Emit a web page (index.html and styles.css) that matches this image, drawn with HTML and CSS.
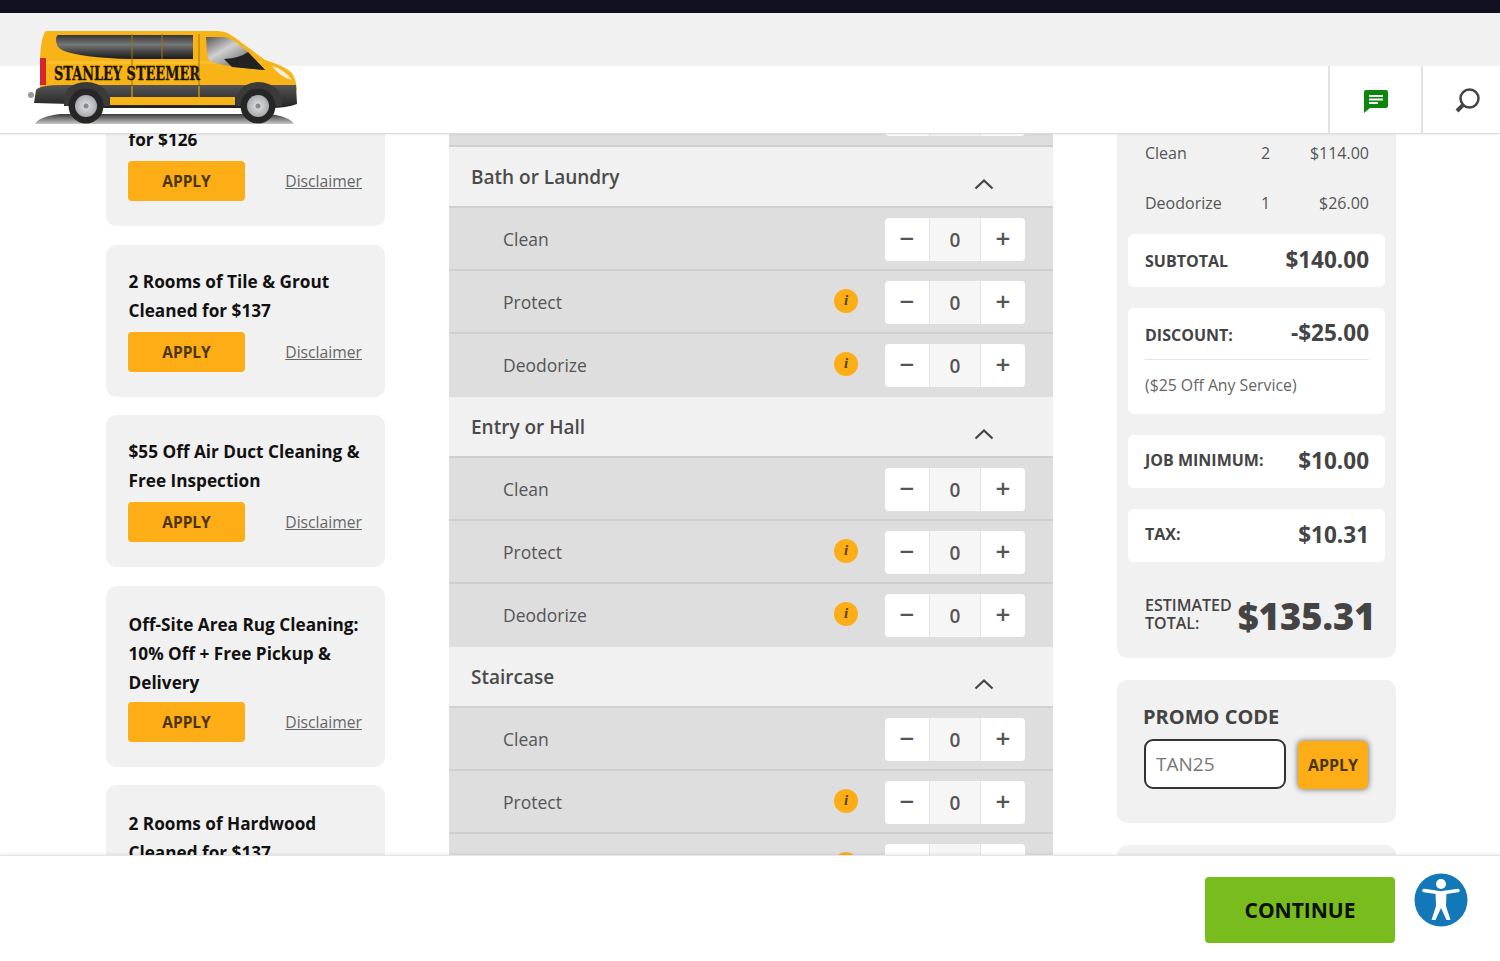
FILE: index.html
```html
<!DOCTYPE html>
<html lang="en">
<head>
<meta charset="utf-8">
<title>Stanley Steemer</title>
<link rel="stylesheet" href="styles.css">
</head>
<body>
<div class="page">
  <div class="topbar"></div>
  <header class="header">
    <div class="header-band"></div>
    <div class="header-nav">
      <button class="nav-btn nav-chat" aria-label="Chat">
        <svg width="26" height="25" viewBox="0 0 26 25"><path class="chat-shape" d="M3 1h20a2 2 0 0 1 2 2v14a2 2 0 0 1-2 2H7l-6 5V3a2 2 0 0 1 2-2z"/><path class="chat-lines" d="M6 7h14M6 10.500h14M6 14h9"/></svg>
      </button>
      <button class="nav-btn nav-search" aria-label="Search">
        <svg width="28" height="28" viewBox="0 0 28 28"><circle class="search-ring" cx="16.500" cy="11.500" r="9"/><path class="search-handle" d="M9.800 18.200 4 24"/></svg>
      </button>
    </div>
    <svg class="logo" width="290" height="110" viewBox="20 20 290 110" role="img" aria-label="Stanley Steemer van">
      <defs>
        <linearGradient id="win" x1="0" y1="0" x2="0" y2="1"><stop offset="0" stop-color="#333"/><stop offset="0.4" stop-color="#777"/><stop offset="0.7" stop-color="#444"/><stop offset="1" stop-color="#1a1a1a"/></linearGradient>
        <linearGradient id="cab" x1="0" y1="0" x2="1" y2="1"><stop offset="0" stop-color="#555"/><stop offset="0.35" stop-color="#d0d0d0"/><stop offset="0.7" stop-color="#777"/><stop offset="1" stop-color="#333"/></linearGradient>
        <linearGradient id="shad" x1="0" y1="0" x2="0" y2="1"><stop offset="0" stop-color="#3a3a3a"/><stop offset="1" stop-color="#c8c8c8"/></linearGradient>
        <linearGradient id="band" x1="0" y1="0" x2="0" y2="1"><stop offset="0" stop-color="#555"/><stop offset="1" stop-color="#222"/></linearGradient>
        <radialGradient id="hub"><stop offset="0" stop-color="#e2e4e6"/><stop offset="1" stop-color="#a8aaad"/></radialGradient>
      </defs>
      <path fill="url(#shad)" d="M35 124Q38 117 60 114H270Q290 117 294 124Z"/>
      <path fill="#f8b316" d="M46 31H218Q226 31 234 37L265 60Q282 65 291 72Q296 78 297 90H40V58Q41 36 46 31Z"/>
      <path fill="#fcc83a" d="M47 61H262V64H47Z" opacity=".6"/>
      <path fill="url(#win)" d="M58 35H193V59H132Q80 58 62 50Q56 47 56 40Q56 36 58 35Z"/>
      <path stroke="#9c7414" stroke-width="1" d="M132 34V97M162 34V59M199 34V97"/>
      <path fill="url(#cab)" d="M206 37H224Q232 38 248 52L265 70Q236 68 215 63Q207 61 207 54Z"/>
      <path fill="#222" d="M224 59Q240 58 248 52L265 70L232 67Z"/>
      <path fill="#d6252c" d="M40 58H46V85H40Z"/>
      <path fill="url(#band)" d="M34 103 36 90Q40 85 62 85H296L297 104Q287 108 270 108H105L70 104Z"/>
      <path fill="#f8b316" d="M110 97H235V105H110Z"/>
      <path stroke="#f8b316" stroke-width="1" d="M132 86V97M199 86V97"/>
      <path fill="#3a3a3a" d="M64 106Q62 83 86 82Q110 83 110 106ZM236 106Q236 83 258 82Q282 83 282 106Z"/>
      <circle cx="86" cy="106" r="17.500" fill="#262626"/><circle cx="86" cy="106" r="11" fill="url(#hub)"/><circle cx="86" cy="106" r="2.500" fill="#8a8a8a"/>
      <circle cx="258" cy="106" r="17.500" fill="#262626"/><circle cx="258" cy="106" r="11" fill="url(#hub)"/><circle cx="258" cy="106" r="2.500" fill="#8a8a8a"/>
      <path fill="#f2efe2" d="M272 66Q284 69 292 80Q280 77 272 66Z"/>
      <circle cx="31" cy="95" r="3" fill="#999"/>
      <text class="logo-text" x="54" y="80" textLength="146" lengthAdjust="spacingAndGlyphs">STANLEY STEEMER</text>
    </svg>
  </header>

  <main class="main">
    <section class="offers">
      <article class="offer">
        <h3 class="offer-title">2 Rooms of Carpet Cleaned<br>for $126</h3>
        <div class="offer-actions"><button class="apply">APPLY</button><a class="disclaimer" href="#">Disclaimer</a></div>
      </article>
      <article class="offer">
        <h3 class="offer-title">2 Rooms of Tile &amp; Grout<br>Cleaned for $137</h3>
        <div class="offer-actions"><button class="apply">APPLY</button><a class="disclaimer" href="#">Disclaimer</a></div>
      </article>
      <article class="offer">
        <h3 class="offer-title">$55 Off Air Duct Cleaning &amp;<br>Free Inspection</h3>
        <div class="offer-actions"><button class="apply">APPLY</button><a class="disclaimer" href="#">Disclaimer</a></div>
      </article>
      <article class="offer">
        <h3 class="offer-title">Off-Site Area Rug Cleaning:<br>10% Off + Free Pickup &amp;<br>Delivery</h3>
        <div class="offer-actions"><button class="apply">APPLY</button><a class="disclaimer" href="#">Disclaimer</a></div>
      </article>
      <article class="offer">
        <h3 class="offer-title">2 Rooms of Hardwood<br>Cleaned for $137</h3>
        <div class="offer-actions"><button class="apply">APPLY</button><a class="disclaimer" href="#">Disclaimer</a></div>
      </article>
    </section>

    <section class="services">
      <div class="row row-clipped"><span class="row-name">Deodorize</span><div class="stepper"><span class="step">−</span><span class="count">0</span><span class="step">+</span></div></div>

      <div class="area"><span>Bath or Laundry</span><svg class="chev" width="20" height="12" viewBox="0 0 20 12"><path d="M1.500 10.500 10 2.500l8.500 8"/></svg></div>
      <div class="row"><span class="row-name">Clean</span><div class="stepper"><span class="step">−</span><span class="count">0</span><span class="step">+</span></div></div>
      <div class="row"><span class="row-name">Protect</span><span class="info">i</span><div class="stepper"><span class="step">−</span><span class="count">0</span><span class="step">+</span></div></div>
      <div class="row row-last"><span class="row-name">Deodorize</span><span class="info">i</span><div class="stepper"><span class="step">−</span><span class="count">0</span><span class="step">+</span></div></div>

      <div class="area"><span>Entry or Hall</span><svg class="chev" width="20" height="12" viewBox="0 0 20 12"><path d="M1.500 10.500 10 2.500l8.500 8"/></svg></div>
      <div class="row"><span class="row-name">Clean</span><div class="stepper"><span class="step">−</span><span class="count">0</span><span class="step">+</span></div></div>
      <div class="row"><span class="row-name">Protect</span><span class="info">i</span><div class="stepper"><span class="step">−</span><span class="count">0</span><span class="step">+</span></div></div>
      <div class="row row-last"><span class="row-name">Deodorize</span><span class="info">i</span><div class="stepper"><span class="step">−</span><span class="count">0</span><span class="step">+</span></div></div>

      <div class="area"><span>Staircase</span><svg class="chev" width="20" height="12" viewBox="0 0 20 12"><path d="M1.500 10.500 10 2.500l8.500 8"/></svg></div>
      <div class="row"><span class="row-name">Clean</span><div class="stepper"><span class="step">−</span><span class="count">0</span><span class="step">+</span></div></div>
      <div class="row"><span class="row-name">Protect</span><span class="info">i</span><div class="stepper"><span class="step">−</span><span class="count">0</span><span class="step">+</span></div></div>
      <div class="row row-last"><span class="row-name">Deodorize</span><span class="info">i</span><div class="stepper"><span class="step">−</span><span class="count">0</span><span class="step">+</span></div></div>
    </section>

    <aside class="side">
      <div class="summary">
        <div class="line"><span class="line-name">Clean</span><span class="line-qty">2</span><span class="line-price">$114.00</span></div>
        <div class="line"><span class="line-name">Deodorize</span><span class="line-qty">1</span><span class="line-price">$26.00</span></div>
        <div class="total-card total-first"><span class="total-label">SUBTOTAL</span><span class="total-value">$140.00</span></div>
        <div class="total-card total-discount">
          <div class="discount-top"><span class="total-label">DISCOUNT:</span><span class="total-value">-$25.00</span></div>
          <div class="discount-note">($25 Off Any Service)</div>
        </div>
        <div class="total-card total-raised"><span class="total-label">JOB MINIMUM:</span><span class="total-value">$10.00</span></div>
        <div class="total-card total-raised"><span class="total-label">TAX:</span><span class="total-value">$10.31</span></div>
        <div class="estimate"><span class="estimate-label">ESTIMATED<br>TOTAL:</span><span class="estimate-value">$135.31</span></div>
      </div>
      <div class="promo">
        <h3 class="promo-title">PROMO CODE</h3>
        <div class="promo-form">
          <input class="promo-input" type="text" value="TAN25" aria-label="Promo code">
          <button class="promo-apply">APPLY</button>
        </div>
      </div>
      <div class="side-next"></div>
    </aside>
  </main>

  <footer class="footer">
    <button class="continue">CONTINUE</button>
    <svg class="a11y" width="54" height="54" viewBox="0 0 54 54" role="img" aria-label="Accessibility">
      <circle class="a11y-bg" cx="27" cy="27" r="26.500"/>
      <circle class="a11y-fg" cx="27" cy="11" r="5"/>
      <path class="a11y-arms" d="M10 17.500 27 20l17-2.500"/>
      <path class="a11y-fg" d="M21.500 19.500h11L32 33l4.500 14h-4L27 35l-5.500 12h-4L22 33z"/>
    </svg>
  </footer>
</div>
</body>
</html>
```
FILE: styles.css
```css
* { box-sizing: border-box; }
html, body { margin: 0; height: 100%; }
body { font-family: "Open Sans", "Liberation Sans", sans-serif; color: #444; background: #fff; overflow: hidden; }
button { font-family: inherit; border: 0; cursor: pointer; }
h3 { margin: 0; }

.page { height: 961px; display: flex; flex-direction: column; }
.topbar { height: 13px; background: #11111f; flex: none; }

.header { position: relative; flex: none; height: 121px; display: flex; flex-direction: column; z-index: 2; background: #fff; border-bottom: 1px solid #dcdcdc; box-shadow: 0 1px 2px rgba(0,0,0,.06); }
.header-band { height: 53px; background: #f1f1f1; }
.header-nav { flex: 1; display: flex; justify-content: flex-end; }
.nav-btn { background: none; padding: 3px 0 0; display: flex; align-items: center; justify-content: center; border-left: 2px solid #e2e2e2; }
.nav-chat { width: 93px; }
.nav-search { width: 79px; padding: 2px 0 0 10px; }
.chat-shape { fill: #0d860f; }
.chat-lines { stroke: #fff; stroke-width: 2; fill: none; }
.search-ring { fill: none; stroke: #444; stroke-width: 2.500; }
.search-handle { fill: none; stroke: #444; stroke-width: 4; }
.logo { position: absolute; left: 20px; top: 7px; }
.logo-text { font-family: "DejaVu Serif Condensed", "DejaVu Serif", serif; font-weight: 700; font-size: 18px; fill: #1a1508; stroke: #1a1508; stroke-width: .3; }

.main { flex: 1; min-height: 0; overflow: hidden; display: flex; align-items: flex-start; gap: 64px; padding-left: 106px; }

.offers { width: 279px; flex: none; margin-top: -60px; display: flex; flex-direction: column; gap: 18.500px; }
.offer { background: #f1f1f1; border-radius: 10px; padding: 22px 23px 25px 22px; }
.offer:nth-child(n+4) { padding-top: 24px; }
.offer-title { font-size: 17.200px; line-height: 29px; font-weight: 700; color: #111; margin-left: .5px; white-space: nowrap; }
.offer-actions { margin-top: 7px; display: flex; align-items: center; justify-content: space-between; }
.offer:nth-child(n+4) .offer-actions { margin-top: 5px; }
.apply { width: 117px; height: 40px; background: #fdae16; border-radius: 4px; font-size: 15.500px; font-weight: 700; color: #4c340a; }
.disclaimer { font-size: 15.700px; color: #666; text-decoration: underline; }

.services { width: 604px; flex: none; margin-top: -52px; }
.area { height: 61px; background: #f1f1f1; border-bottom: 2px solid #cfcfcf; padding: 0 59px 0 22px; display: flex; align-items: center; justify-content: space-between; font-size: 19px; font-weight: 600; color: #4a4a4a; }
.chev { margin-top: 14px; }
.chev path { fill: none; stroke: #444; stroke-width: 2.200; }
.row { height: 63px; background: #dedede; border-bottom: 2px solid #cfcfcf; padding: 0 28px 0 54px; display: flex; align-items: center; font-size: 17.500px; color: #555; font-weight: 500; }
.row-clipped { height: 65px; }
.row-last { border-bottom-color: #dedede; }
.row-name { margin-right: auto; }
.info { width: 24px; height: 24px; margin-right: 27px; margin-top: -2px; border-radius: 50%; background: #fdae16; color: #5a4210; display: flex; align-items: center; justify-content: center; font-family: "Liberation Serif", serif; font-style: italic; font-weight: 700; font-size: 15px; }
.stepper { width: 140px; height: 43px; margin-top: 1px; display: grid; grid-template-columns: 44px 52px 44px; background: #fff; border-radius: 4px; overflow: hidden; }
.step { display: flex; align-items: center; justify-content: center; font-size: 26px; font-weight: 600; color: #555; padding-bottom: 3px; }
.count { display: flex; align-items: center; justify-content: center; background: #f6f6f6; border-left: 1px solid #e4e4e4; border-right: 1px solid #e4e4e4; font-size: 19px; font-weight: 600; color: #555; padding-top: 2px; }

.side { width: 279px; flex: none; margin-top: -21px; display: flex; flex-direction: column; gap: 22px; }
.summary { background: #f1f1f1; border-radius: 0 0 10px 10px; padding: 15px 11px 0; }
.line { height: 50px; display: grid; grid-template-columns: 116px 18px 1fr; align-items: center; padding: 0 16px 0 17px; font-size: 16px; color: #555; }
.line-price { text-align: right; }
.total-card { background: #fff; border-radius: 6px; height: 53px; padding: 0 16px 0 17px; display: flex; align-items: center; justify-content: space-between; margin-top: 21px; }
.total-first { margin-top: 6px; }
.total-raised { padding-bottom: 3px; }
.total-label { font-size: 16px; font-weight: 700; color: #444; }
.total-value { font-size: 22.500px; font-weight: 700; color: #444; }
.total-first .total-value { margin-top: -2px; }
.total-discount { height: 106px; flex-direction: column; align-items: stretch; justify-content: flex-start; }
.discount-top { height: 52px; display: flex; align-items: center; justify-content: space-between; border-bottom: 1px solid #e6e6e6; }
.discount-top .total-label { margin-top: 2px; }
.discount-top .total-value { margin-top: -2px; }
.discount-note { font-size: 15.800px; color: #666; margin-top: 14px; }
.estimate { height: 96px; display: flex; align-items: center; padding: 8px 0 0 17px; }
.estimate-label { font-size: 16px; line-height: 18px; font-weight: 600; color: #444; flex: none; }
.estimate-value { font-size: 36.300px; font-weight: 800; color: #444; margin: 3px 0 0 6px; white-space: nowrap; }

.promo { background: #f1f1f1; border-radius: 10px; height: 143px; padding: 23px 27px 0; }
.promo-title { font-size: 20px; line-height: 28px; font-weight: 700; color: #444; margin-left: -1px; }
.promo-form { margin-top: 8px; display: flex; align-items: flex-start; gap: 12px; }
.promo-input { width: 142px; height: 50px; border: 2px solid #333; border-radius: 9px; background: #fff; padding: 0 10px; font-family: inherit; font-size: 19px; color: #777; }
.promo-apply { width: 70px; height: 48px; margin-top: 2px; background: #fdae16; border-radius: 5px; font-size: 16px; font-weight: 700; color: #4c340a; box-shadow: 0 0 6px rgba(0,0,0,.6); }
.side-next { background: #f1f1f1; border-radius: 10px; height: 100px; }

.footer { position: relative; flex: none; height: 106px; z-index: 2; background: #fff; border-top: 1px solid #e6e6e6; box-shadow: 0 -1px 3px rgba(0,0,0,.08); display: flex; justify-content: flex-end; align-items: flex-start; padding: 21px 105px 0 0; }
.continue { width: 190px; height: 66px; background: #78bc1e; border-radius: 4px; font-size: 21px; font-weight: 700; color: #0a0f00; }
.a11y { position: absolute; left: 1414px; top: 17px; }
.a11y-bg { fill: #1378b8; }
.a11y-fg { fill: #fff; }
.a11y-arms { fill: none; stroke: #fff; stroke-width: 3.500; stroke-linecap: round; }
```
